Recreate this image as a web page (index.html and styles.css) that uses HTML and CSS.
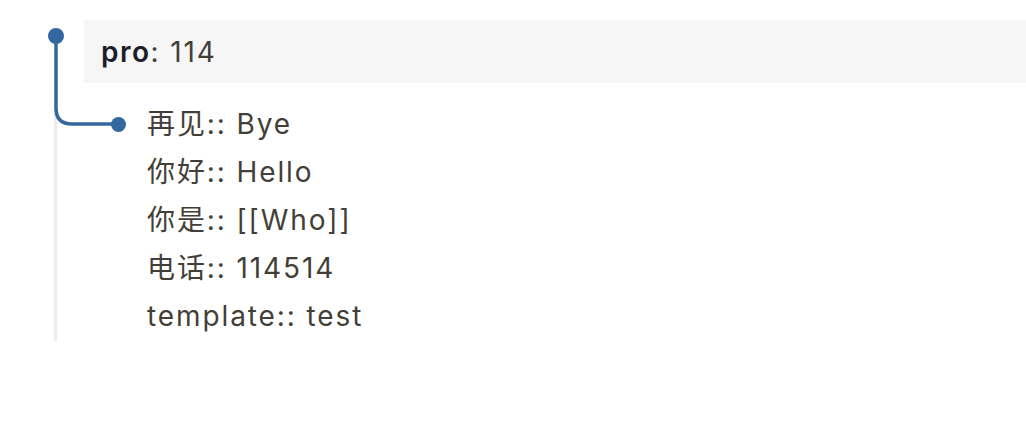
FILE: index.html
```html
<!DOCTYPE html>
<html>
<head>
<meta charset="utf-8">
<link rel="stylesheet" href="styles.css">
</head>
<body>
<div class="tree">
  <svg class="connector" width="130" height="140" viewBox="0 0 130 140">
    <path d="M56 36 V108 Q56 124 72 124 H112" fill="none" stroke="#34679f" stroke-width="3.5"/>
  </svg>
  <div class="block-row">
    <div class="bullet-col"><span class="bullet"></span></div>
    <div class="props"><span class="key">pro</span>: 114</div>
  </div>
  <div class="children">
    <div class="child">
      <div class="child-bullet-col"><span class="bullet small"></span></div>
      <div class="lines">
        <div class="line">再见:: Bye</div>
        <div class="line">你好:: Hello</div>
        <div class="line">你是:: [[Who]]</div>
        <div class="line">电话:: 114514</div>
        <div class="line">template:: test</div>
      </div>
    </div>
  </div>
</div>
</body>
</html>
```

FILE: styles.css
```css
html, body {
  margin: 0;
  padding: 0;
  background: #ffffff;
}
body {
  font-family: Inter, "Noto Sans CJK SC", sans-serif;
  font-size: 28px;
  letter-spacing: 1.9px;
  color: #433f38;
}
.tree {
  position: relative;
  padding-top: 20px;
}
.connector {
  position: absolute;
  left: 0;
  top: 0;
}
.block-row {
  display: flex;
  height: 63px;
}
.bullet-col {
  width: 84px;
  flex: none;
  display: flex;
  align-items: flex-start;
}
.bullet {
  display: block;
  width: 16px;
  height: 16px;
  border-radius: 50%;
  background: #34679f;
  margin-left: 48px;
  margin-top: 8px;
  position: relative;
  z-index: 1;
}
.props {
  flex: 1;
  background: #f6f6f6;
  padding-left: 17px;
  display: flex;
  align-items: center;
}
.key {
  font-weight: 600;
  color: #1c1e2b;
  letter-spacing: 1.5px;
}
.children {
  margin-left: 54px;
  margin-top: 17px;
  border-left: 3px solid #ececec;
  height: 241px;
}
.child {
  display: flex;
}
.child-bullet-col {
  width: 90px;
  flex: none;
}
.bullet.small {
  width: 15px;
  height: 15px;
  margin-left: 54px;
  margin-top: 17px;
}
.line {
  line-height: 48px;
  height: 48px;
}
```
